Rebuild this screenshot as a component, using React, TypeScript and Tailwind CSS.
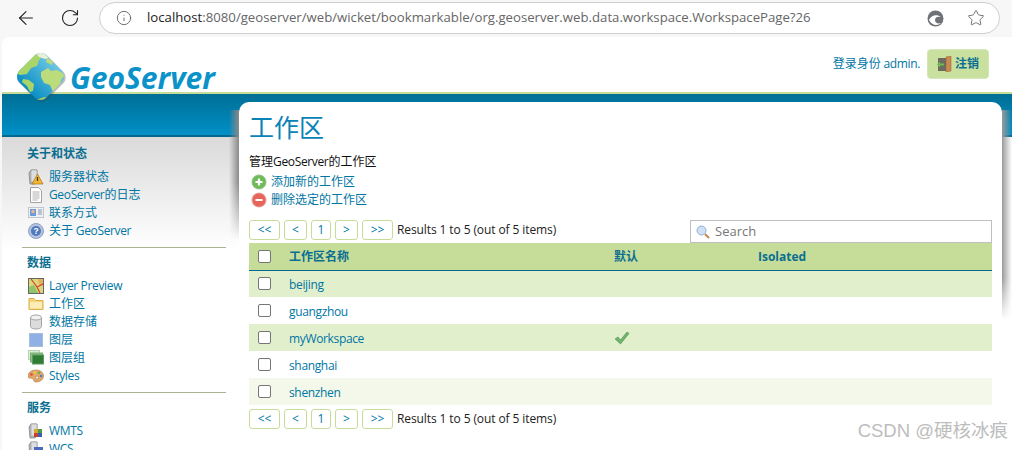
import React from 'react';
import { ArrowLeft, RotateCw, Info, Star } from 'lucide-react';

const cjk = '[font-family:"Open_Sans","Noto_Sans_CJK_SC",sans-serif]';

// 라틴 글자만 자간을 줄임 (CJK 글자 폭은 그대로 유지)
const Txt = ({ children }: { children: string }) => (
  <>
    {children.split(/([\x00-\x7f]+)/).map((part, i) =>
      i % 2 === 1 ? (
        <span key={i} className="tracking-[-0.35px]">
          {part}
        </span>
      ) : (
        part
      )
    )}
  </>
);

const Logo = () => (
  <svg width="54" height="54" viewBox="0 0 54 54">
    <defs>
      <linearGradient id="sea" x1="0" y1="0" x2="0" y2="1">
        <stop offset="0" stopColor="#6cc6e2" />
        <stop offset="1" stopColor="#0a8ec4" />
      </linearGradient>
      <clipPath id="diamond">
        <rect x="7.500" y="7.500" width="38" height="38" rx="8" transform="rotate(45 26.500 26.500)" />
      </clipPath>
    </defs>
    <rect x="8" y="8" width="39" height="39" rx="8" transform="rotate(45 27.500 27.500)" fill="#444" opacity="0.35" />
    <rect x="7.500" y="7.500" width="38" height="38" rx="8" transform="rotate(45 26.500 26.500)" fill="url(#sea)" />
    <g clipPath="url(#diamond)">
      <path d="M10 14l8-8 7-3 3 3-3 4-2 6-6 2-4 6-7 1-5-3z" fill="#a9d468" />
      <path d="M22 3l8 0 5 5-4 1-6-2z" fill="#e8f0dc" />
      <path d="M27 22l7-4 3 3 6-1 9 5-4 3-3 9-6 5-3-7-6-2-3-6z" fill="#bcdc7c" />
      <path d="M9 29l6 1 5 4-1 7-3 1-3-6-5-4z" fill="#a9d468" />
      <path d="M22 50l8-3 5 1-8 7z" fill="#9ccb62" />
      <path d="M33 8l6 3-1 4-6-3z" fill="#bcdc7c" />
    </g>
  </svg>
);

const ServerIcon = ({ children }: { children?: React.ReactNode }) => (
  <svg width="16" height="16" viewBox="0 0 16 16" className="shrink-0">
    <path d="M1 4l2-3h6v12l-2 2H2z" fill="#b9bdc2" stroke="#777" strokeWidth="0.7" />
    <path d="M3 1h6v12H3z" fill="#dcdfe2" stroke="#888" strokeWidth="0.5" />
    {children}
  </svg>
);

const sideIcons: Record<string, React.ReactNode> = {
  status: (
    <ServerIcon>
      <path d="M9.500 5l5.500 10H4z" fill="#f2b632" stroke="#a8741a" strokeWidth="0.7" />
      <path d="M9.500 8v4" stroke="#4a3308" strokeWidth="1.200" />
    </ServerIcon>
  ),
  log: (
    <svg width="16" height="16" viewBox="0 0 16 16" className="shrink-0">
      <path d="M2.500 .5h8l3 3v12h-11z" fill="#fff" stroke="#a2a2a2" />
      <path d="M4.500 5h7M4.500 7h7M4.500 9h7M4.500 11h7M4.500 13h5" stroke="#b0b0b0" />
    </svg>
  ),
  contact: (
    <svg width="16" height="16" viewBox="0 0 16 16" className="shrink-0">
      <rect x="0.500" y="2.500" width="15" height="10" fill="#eef1f6" stroke="#c0c6d2" />
      <rect x="2" y="4" width="6" height="7" fill="#6f9bd8" />
      <circle cx="5" cy="6.500" r="1.700" fill="#f0b98c" />
      <path d="M10 5h4M10 7h4M10 9h4" stroke="#8a93a6" />
    </svg>
  ),
  about: (
    <svg width="16" height="16" viewBox="0 0 16 16" className="shrink-0">
      <circle cx="8" cy="8" r="7.500" fill="#b4c3e0" stroke="#8fa0c4" />
      <circle cx="8" cy="8" r="5" fill="#4f78bd" />
      <text x="8" y="11" textAnchor="middle" fontSize="8.500" fontWeight="bold" fill="#fff" fontFamily="Liberation Sans">?</text>
    </svg>
  ),
  preview: (
    <svg width="16" height="16" viewBox="0 0 16 16" className="shrink-0">
      <rect x="0.500" y="0.500" width="15" height="15" fill="#d9d97a" stroke="#666" />
      <path d="M1 9l5-2 4 8H1z" fill="#8ec46a" />
      <path d="M10 1h5v7l-4-2z" fill="#e7b05a" />
      <path d="M3 1l6 8 3 6M9 9l6-3" stroke="#d83b2e" strokeWidth="1.200" fill="none" />
    </svg>
  ),
  workspace: (
    <svg width="16" height="16" viewBox="0 0 16 16" className="shrink-0">
      <path d="M1 2.500h5l1.500 2h7.500v9H1z" fill="#f6d679" stroke="#d9ae4b" />
      <path d="M2 6h12v6.500H2z" fill="#fcedb7" />
    </svg>
  ),
  store: (
    <svg width="16" height="16" viewBox="0 0 16 16" className="shrink-0">
      <path d="M2.500 3.500v9c0 1.500 2.500 2.500 5.500 2.500s5.500-1 5.500-2.500v-9z" fill="#dcdcdc" stroke="#a5a5a5" />
      <ellipse cx="8" cy="3.500" rx="5.500" ry="2.500" fill="#f2f2f2" stroke="#a5a5a5" />
    </svg>
  ),
  layer: (
    <svg width="16" height="16" viewBox="0 0 16 16" className="shrink-0">
      <rect x="1.500" y="1.500" width="13" height="13" fill="#8fb0e4" stroke="#a9bcd8" />
    </svg>
  ),
  group: (
    <svg width="16" height="16" viewBox="0 0 16 16" className="shrink-0">
      <rect x="0.500" y="0.500" width="11" height="9" fill="#d9ecd6" stroke="#b5d3b2" />
      <rect x="2.500" y="3" width="12" height="9" fill="#8cc084" stroke="#7bae74" />
      <rect x="4.500" y="5" width="11" height="9" fill="#2f7d34" stroke="#5c9a5e" />
    </svg>
  ),
  styles: (
    <svg width="16" height="16" viewBox="0 0 16 16" className="shrink-0">
      <path d="M8 2C3 2 0 5 0 8c0 3 3 2 4.500 2.500S5 14 8 14c4.500 0 7.500-3 7.500-6S13 2 8 2z" fill="#e0a76c" stroke="#a8703a" strokeWidth="0.600" />
      <circle cx="3.500" cy="6.500" r="1.300" fill="#e0483a" />
      <circle cx="7" cy="4.500" r="1.300" fill="#f0c93a" />
      <circle cx="11" cy="4.800" r="1.300" fill="#5fb04a" />
      <circle cx="13" cy="8" r="1.300" fill="#4a7fd0" />
      <circle cx="9" cy="9.500" r="1.500" fill="#f6e3c8" stroke="#a8703a" strokeWidth="0.500" />
    </svg>
  ),
  wmts: (
    <ServerIcon>
      <rect x="6" y="6" width="4" height="4" fill="#d8a52c" />
      <rect x="10" y="6" width="4" height="4" fill="#4a9a48" />
      <rect x="6" y="10" width="4" height="4" fill="#c8402f" />
      <rect x="10" y="10" width="4" height="4" fill="#3a5fb0" />
    </ServerIcon>
  ),
  wcs: (
    <ServerIcon>
      <rect x="6" y="6" width="9" height="8" fill="#4a68c0" />
    </ServerIcon>
  ),
};

const sections = [
  {
    title: '关于和状态',
    items: [
      ['status', '服务器状态'],
      ['log', 'GeoServer的日志'],
      ['contact', '联系方式'],
      ['about', '关于 GeoServer'],
    ],
  },
  {
    title: '数据',
    items: [
      ['preview', 'Layer Preview'],
      ['workspace', '工作区'],
      ['store', '数据存储'],
      ['layer', '图层'],
      ['group', '图层组'],
      ['styles', 'Styles'],
    ],
  },
  {
    title: '服务',
    items: [
      ['wmts', 'WMTS'],
      ['wcs', 'WCS'],
    ],
  },
];

const rows = [
  { name: 'beijing', bg: 'bg-[#e1efcd]' },
  { name: 'guangzhou', bg: 'bg-white' },
  { name: 'myWorkspace', bg: 'bg-[#e1efcd]', isDefault: true },
  { name: 'shanghai', bg: 'bg-white' },
  { name: 'shenzhen', bg: 'bg-[#f3f8ea]' },
];

const Checkbox = () => (
  <span className="block h-[13px] w-[13px] rounded-[2px] border border-[#767676] bg-white" />
);

const Pager = () => (
  <div className="flex h-5 items-center text-xs">
    {['<<', '<', '1', '>', '>>'].map((label, i) => (
      <span
        key={i}
        className={`mr-[4px] flex h-5 items-center justify-center rounded-[3px] border border-[#c6dd9a] text-[#0076a3] ${
          label.length === 2 ? 'w-[31px]' : label === '1' ? 'w-5' : 'w-[23px]'
        }`}
      >
        {label}
      </span>
    ))}
    <span className="tracking-[-0.1px] text-[#222]">Results 1 to 5 (out of 5 items)</span>
  </div>
);

export default function App() {
  return (
    <div className={`relative h-[450px] w-[1012px] overflow-hidden bg-[#f7f7f7] text-xs ${cjk}`}>
      {/* 브라우저 주소창 */}
      <div className="flex h-[37px] items-start">
        <div className="flex w-[99px] items-center pt-[7px] text-[#222]">
          <ArrowLeft size={22} strokeWidth={1.2} className="ml-[15px]" />
          <RotateCw size={20} strokeWidth={1.3} className="ml-[23px]" />
        </div>
        <div className="mt-[2px] flex h-[32px] w-[901px] items-center rounded-full border border-[#cfcfcf] bg-white pl-[16px]">
          <Info size={16} strokeWidth={1.4} className="text-[#666]" />
          <span className="ml-[15px] whitespace-nowrap text-[13.2px] text-[#666]">
            <span className="text-[#222]">localhost</span>:8080/geoserver/web/wicket/bookmarkable/org.geoserver.web.data.workspace.WorkspacePage?26
          </span>
          <svg width="17" height="17" viewBox="0 0 17 17" className="ml-auto">
            <circle cx="8.500" cy="8.500" r="8" fill="#6f7377" />
            <path d="M2 10c2-5 8-6 12-3-3-1-6 0-6 3 0 3 3 4 6 3-3 3-9 3-12-3z" fill="#fff" />
          </svg>
          <Star size={18} strokeWidth={1.2} className="ml-[23px] mr-[14px] text-[#666]" />
        </div>
      </div>

      {/* 페이지 본문 */}
      <div className="ml-[2px] h-[413px] overflow-hidden rounded-tl-[8px] bg-white">
        <div className="flex h-[55px] items-start justify-between">
          <div className="flex items-start pl-[12px] pt-[13px]">
            <Logo />
            <span className="ml-[2px] mt-[10px] text-[30px] font-bold italic leading-[36px] text-[#0b93c9]">
              GeoServer
            </span>
          </div>
          <div className="flex items-center pr-[23px] pt-[12px]">
            <span className="text-[#0076a3]"><Txt>登录身份 admin.</Txt></span>
            <span className="ml-[7px] flex h-[30px] w-[62px] items-center justify-center rounded-[4px] border border-[#d5e6b8] bg-[#c9e09f] font-bold text-[#0b6f91]">
              <svg width="16" height="16" viewBox="0 0 16 16" className="mr-[2px]">
                <rect x="1" y="2" width="9" height="13" fill="#6b6b62" />
                <path d="M9 1l5-1v15l-5 1z" fill="#c88a50" stroke="#96602f" strokeWidth="0.500" />
                <path d="M0 8.500l3-3v2h4v2H3v2z" fill="#6dbb4e" />
              </svg>
              注销
            </span>
          </div>
        </div>
        <div className="h-[2px] bg-[#c6dd9a]" />
        <div className="h-[43px] border-b-2 border-[#00698f] bg-gradient-to-b from-[#006f95] to-[#0090c8]" />

        <div className="flex">
          {/* 사이드바 */}
          <aside className="h-[320px] w-[237px] shrink-0 bg-gradient-to-b from-[#dadada] to-white to-[35%] pl-[20px] pr-[13px] pt-[8px]">
            {sections.map((section, i) => (
              <div key={section.title} className={i > 0 ? 'mt-[7px] border-t border-[#a8b392] pt-[6px]' : ''}>
                <h3 className="pl-[5px] text-xs font-bold leading-[18px] text-[#0b6f91]">{section.title}</h3>
                <ul className="mt-[5px] pl-[6px]">
                  {section.items.map(([icon, label]) => (
                    <li key={label} className="flex h-[18px] items-center gap-[5px] text-[#0076a3]">
                      {sideIcons[icon]}
                      <span><Txt>{label}</Txt></span>
                    </li>
                  ))}
                </ul>
              </div>
            ))}
          </aside>

          {/* 메인 패널 */}
          <main className="relative z-10 -mt-[35px] h-[350px] w-[763px] rounded-t-[10px] bg-white px-[10px] pt-[8px]">
            <div className="pointer-events-none absolute -left-[10px] top-[8px] h-[130px] w-[10px] bg-gradient-to-l from-[#8a8a8a] to-transparent [mask-image:linear-gradient(to_bottom,black_55%,transparent)]" />
            <div className="pointer-events-none absolute -right-[10px] top-[8px] h-[210px] w-[10px] bg-gradient-to-r from-[#9a9a9a] to-transparent [mask-image:linear-gradient(to_bottom,black_80%,transparent)]" />
            <h1 className="text-[25px] font-normal leading-[34px] text-[#0b83b5]">工作区</h1>
            <p className="mt-[9px] leading-[18px] text-[#111]"><Txt>管理GeoServer的工作区</Txt></p>
            <div className="mt-[2px] flex h-[18px] items-center text-[#0076a3]">
              <svg width="16" height="16" viewBox="0 0 16 16" className="ml-[2px] mr-[4px]">
                <circle cx="8" cy="8" r="7" fill="#6fbb5a" stroke="#8fbf80" />
                <path d="M8 4.500v7M4.500 8h7" stroke="#fff" strokeWidth="2.200" />
              </svg>
              添加新的工作区
            </div>
            <div className="flex h-[18px] items-center text-[#0076a3]">
              <svg width="16" height="16" viewBox="0 0 16 16" className="ml-[2px] mr-[4px]">
                <circle cx="8" cy="8" r="7" fill="#e8645a" stroke="#e39a92" />
                <path d="M4.500 8h7" stroke="#fff" strokeWidth="2.200" />
              </svg>
              删除选定的工作区
            </div>

            <div className="mt-[11px] flex items-start justify-between">
              <Pager />
              <div className="flex h-[23px] w-[302px] items-center border border-[#c0c0c0] bg-white pl-[5px] text-[13px] text-[#777]">
                <svg width="14" height="14" viewBox="0 0 14 14" className="mr-[5px]">
                  <circle cx="5.500" cy="5.500" r="4.500" fill="#cfe0f5" stroke="#8fb0d8" />
                  <path d="M9 9l4 4" stroke="#c8854a" strokeWidth="2" />
                </svg>
                Search
              </div>
            </div>

            <table className="w-[743px] table-fixed border-collapse">
              <thead>
                <tr className="h-[27px] border-b border-[#00698f] bg-[#c6dd9a] text-left font-bold text-[#0b6f91]">
                  <th className="w-[40px] pl-[9px] pt-[1px]"><Checkbox /></th>
                  <th className="w-[325px] pt-[1px] font-bold">工作区名称</th>
                  <th className="w-[144px] pt-[1px] font-bold">默认</th>
                  <th className="pt-[1px] font-bold">Isolated</th>
                </tr>
              </thead>
              <tbody>
                {rows.map(row => (
                  <tr key={row.name} className={`h-[27px] text-[#0076a3] ${row.bg}`}>
                    <td className="pl-[9px]"><Checkbox /></td>
                    <td className="pt-[2px] tracking-[-0.35px]">{row.name}</td>
                    <td>
                      {row.isDefault && (
                        <svg width="16" height="14" viewBox="0 0 16 14" className="block">
                          <path d="M1 8l3-2 2.500 3L13 1l2 1.500L6.500 13z" fill="#6fb56a" stroke="#4f9150" strokeWidth="0.600" />
                        </svg>
                      )}
                    </td>
                    <td />
                  </tr>
                ))}
              </tbody>
            </table>
            <div className="mt-[4px]">
              <Pager />
            </div>
          </main>
        </div>
      </div>

      {/* 워터마크 */}
      <div className="absolute bottom-[6px] right-[4px] z-20 text-[18.500px] leading-[26px] text-[#bdbdbd] [font-family:'Liberation_Sans','Noto_Sans_CJK_SC',sans-serif]">
        CSDN @硬核冰痕
      </div>
    </div>
  );
}
